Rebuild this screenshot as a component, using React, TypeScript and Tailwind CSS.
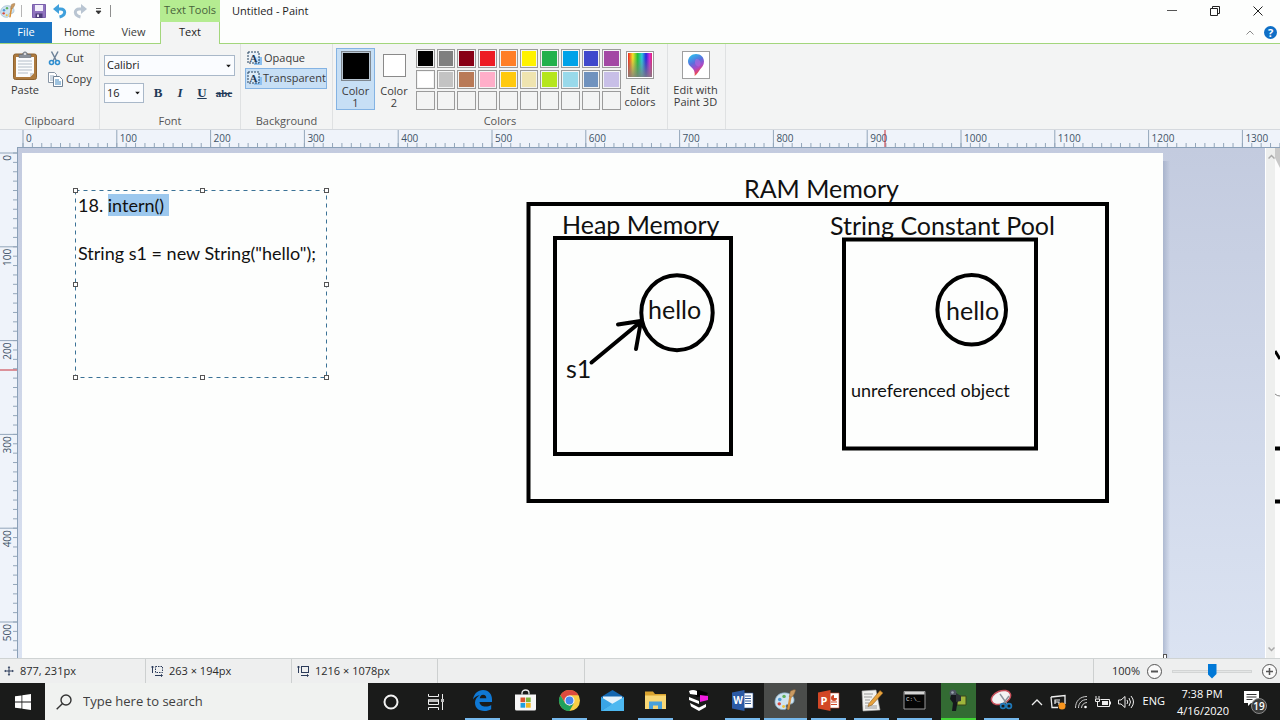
import type { ReactNode } from "react";
import clsx from "clsx";

const palette = [
  ["#000000", "#7f7f7f", "#880015", "#ed1c24", "#ff7f27", "#fff200", "#22b14c", "#00a2e8", "#3f48cc", "#a349a4"],
  ["#ffffff", "#c3c3c3", "#b97a57", "#ffaec9", "#ffc90e", "#efe4b0", "#b5e61d", "#99d9ea", "#7092be", "#c8bfe7"],
  [null, null, null, null, null, null, null, null, null, null],
];

// 100 image pixels take 93.8 screen pixels
const RULER_STEP = 93.8;

// indexes of the marks that fit in the given length, leaving room for the last label
const marks = (length: number, step: number) =>
  Array.from({ length: Math.max(0, Math.ceil(length / step)) }, (_, i) => i);

function Caret() {
  return (
    <svg className="pointer-events-none absolute right-1 top-1/2 -translate-y-1/2" width="5" height="3" viewBox="0 0 5 3">
      <path d="M0 0h5L2.5 3z" fill="#1a1a1a" />
    </svg>
  );
}

function PaletteIcon({ size }: { size: number }) {
  return (
    <svg width={size} height={size} viewBox="0 0 24 24">
      <path
        d="M11 4C5 4 1 8.500 1 13.500 1 18.500 5 21.500 10 21.500c3 0 3-1.500 2.500-3-.4-1.700.5-2.500 2.500-2.500 4 0 6-1.500 6-4.500C21 7 16.500 4 11 4z"
        fill="#cfe3f0"
        stroke="#7fa6c0"
        strokeWidth=".8"
      />
      <circle cx="6" cy="11" r="1.900" fill="#4f9bd8" />
      <circle cx="10.500" cy="7.700" r="1.800" fill="#5fb05a" />
      <circle cx="5.500" cy="15.500" r="1.800" fill="#d9463d" />
      <circle cx="10" cy="18.300" r="1.500" fill="#f0c23a" />
      <path d="M15 20.500l2.200-13" stroke="#d8903a" strokeWidth="2.400" strokeLinecap="round" />
      <path d="M16 8l1-5.500c2-1.500 4.500-2 5.500-1.500-.5 3-2 5.500-4 7.500z" fill="#c99a62" stroke="#8c6337" strokeWidth=".5" />
    </svg>
  );
}

function SaveIcon() {
  return (
    <svg width="14" height="14" viewBox="0 0 14 14">
      <path d="M.5.5h13v13h-13z" fill="#8f74be" stroke="#7a60ac" />
      <path d="M3 1h8v6H3z" fill="#f2effa" />
      <path d="M3.500 9.500h7V14h-7z" fill="#4b3b78" />
      <path d="M5 10.500h2V13H5z" fill="#e8e2f5" />
    </svg>
  );
}

function TurnArrow({ color, flip }: { color: string; flip?: boolean }) {
  return (
    <svg className={clsx(flip && "-scale-x-100")} width="14" height="15" viewBox="0 0 14 15">
      <path d="M4 5h3.500C13.500 5 13 11.500 6.500 13" fill="none" stroke={color} strokeWidth="3" />
      <path d="M6 0v10L0 5z" fill={color} />
    </svg>
  );
}

function ClipboardIcon() {
  return (
    <svg width="24" height="29" viewBox="0 0 24 29">
      <rect x=".5" y="3" width="23" height="25.500" rx="2" fill="#ad7a3e" stroke="#8d6230" />
      <path d="M3 6h18v16l-4 4H3z" fill="#fbfcfd" />
      <path d="M5 10h14M5 13h14M5 16h14M5 19h14M5 22h10" stroke="#b3bdc8" />
      <path d="M17 26v-4h4z" fill="#cfd5dc" />
      <path d="M6 6.500V3.500h3.500C9.500 0 14.500 0 14.500 3.500H18v3z" fill="#8a9099" stroke="#5f666f" strokeWidth=".6" />
      <circle cx="12" cy="3" r="1" fill="#f0f0f0" />
    </svg>
  );
}

function ScissorsIcon() {
  return (
    <svg width="14" height="15" viewBox="0 0 14 15" fill="none">
      <path d="M3.500 0.500L8.500 10M10 .5L5 10" stroke="#6d8298" strokeWidth="1.500" />
      <circle cx="3.500" cy="11.500" r="2" stroke="#2f8ed0" strokeWidth="1.600" />
      <circle cx="9.500" cy="11.500" r="2" stroke="#2f8ed0" strokeWidth="1.600" />
    </svg>
  );
}

function CopyIcon() {
  return (
    <svg width="15" height="15" viewBox="0 0 15 15">
      <path d="M.5.5h6l2 2v8h-8z" fill="#fff" stroke="#8795a5" />
      <path d="M2 4h4M2 6h4M2 8h4" stroke="#9cb0c4" />
      <path d="M5.500 4.500h6l3 3v7h-9z" fill="#fff" stroke="#6f8194" />
      <path d="M7 8h4M7 10h6M7 12h6" stroke="#3f86bd" />
    </svg>
  );
}

function LetterBoxIcon() {
  return (
    <svg width="16" height="15" viewBox="0 0 16 15">
      <path d="M7 6h8v8H7z" fill="#8cc0f0" />
      <rect x="1" y="1" width="11" height="11" fill="#e6f0fa" fillOpacity=".7" stroke="#24425f" strokeDasharray="2 1" />
      <text x="6.500" y="10.500" textAnchor="middle" fontSize="11" fontWeight="bold" fontFamily="Liberation Serif, serif" fill="#1f3a58">
        A
      </text>
    </svg>
  );
}

function RainbowIcon() {
  return (
    <svg width="28" height="28" viewBox="0 0 28 28">
      <defs>
        <linearGradient id="hue">
          <stop offset="0" stopColor="#e22" />
          <stop offset=".2" stopColor="#f4e22a" />
          <stop offset=".4" stopColor="#22c03a" />
          <stop offset=".58" stopColor="#2cc8dd" />
          <stop offset=".75" stopColor="#2727dd" />
          <stop offset=".9" stopColor="#d22ad8" />
          <stop offset="1" stopColor="#e2286a" />
        </linearGradient>
        <linearGradient id="fade" x2="0" y2="1">
          <stop offset=".2" stopColor="#808080" stopOpacity="0" />
          <stop offset="1" stopColor="#808080" stopOpacity=".85" />
        </linearGradient>
      </defs>
      <rect x=".5" y=".5" width="27" height="27" fill="#fff" stroke="#9a9a9a" />
      <path d="M2 2h24v24H2z" fill="url(#hue)" />
      <path d="M2 2h24v24H2z" fill="url(#fade)" />
    </svg>
  );
}

function Paint3DIcon() {
  return (
    <svg width="28" height="28" viewBox="0 0 28 28">
      <defs>
        <linearGradient id="drop" x1=".2" x2=".6" y2="1">
          <stop offset="0" stopColor="#29c3f0" />
          <stop offset=".4" stopColor="#5a6fdc" />
          <stop offset=".65" stopColor="#a94bc8" />
          <stop offset=".85" stopColor="#e2446a" />
          <stop offset="1" stopColor="#f49a2c" />
        </linearGradient>
      </defs>
      <rect x=".5" y=".5" width="27" height="27" fill="#fff" stroke="#9f9f9f" />
      <path d="M14 3c5 0 8 3.500 8 7.500 0 3.500-2 5.500-4 8-1.500 2-3 5-5.500 6.500.5-2 0-4-.5-5.500C11 16.500 6 15 6 10.500 6 6.500 9.500 3 14 3z" fill="url(#drop)" />
      <path d="M14 8c3 0 5 2 4.500 5-.4 2-2 3-3.500 2-2-1.500-3-4-1-7z" fill="#b565e0" fillOpacity=".6" />
    </svg>
  );
}

function TitleBar() {
  return (
    <header className="flex h-[22px] items-center">
      <div className="flex h-full w-40 items-center">
        <PaletteIcon size={16} />
        <span className="ml-[5px] h-3 w-px bg-[#b5b5b5]" />
        <button aria-label="Save" className="ml-[10px]"><SaveIcon /></button>
        <button aria-label="Undo" className="ml-[7px]"><TurnArrow color="#3fa0dc" /></button>
        <button aria-label="Redo" className="ml-[6px]"><TurnArrow color="#b9c5d2" flip /></button>
        <button aria-label="Customize Quick Access Toolbar" className="ml-2">
          <svg width="7" height="7" viewBox="0 0 7 7"><path d="M1 .5h5M1 3h5L3.500 6z" stroke="#333" strokeWidth=".8" fill="#333" /></svg>
        </button>
        <span className="ml-2 h-3 w-px bg-[#8f8f8f]" />
      </div>
      <div className="h-full w-[60px] bg-[#b5ec91] text-center text-[11px] leading-[20px] text-[#47623b]">Text Tools</div>
      <h1 className="ml-3 text-[11px] text-[#1d1d1d]">Untitled - Paint</h1>
      <div className="ml-auto flex h-full items-center text-[#222]">
        <button aria-label="Minimize" className="flex w-[43px] justify-center">
          <svg width="10" height="10" viewBox="0 0 10 10"><path d="M0 4.500h10" stroke="#555" /></svg>
        </button>
        <button aria-label="Restore" className="flex w-[43px] justify-center">
          <svg width="10" height="10" viewBox="0 0 10 10" fill="none" stroke="currentColor"><path d="M.5 2.500h7v7h-7zM2.500 2.500v-2h7v7h-2" /></svg>
        </button>
        <button aria-label="Close" className="flex w-[43px] justify-center">
          <svg width="10" height="10" viewBox="0 0 10 10" stroke="currentColor"><path d="M.5.5l9 9M9.500.5l-9 9" /></svg>
        </button>
        <span className="w-px" />
      </div>
    </header>
  );
}

function Tabs() {
  return (
    <nav className="flex h-[22px] items-stretch border-b border-[#a3d67c] text-[11px] text-[#3c3c3c]">
      <button className="w-[52px] bg-[#1a75c4] text-white">File</button>
      <button className="w-[55px]">Home</button>
      <button className="w-[53px]">View</button>
      <button className="-mb-px w-[60px] border-x border-[#a3d67c] bg-[#f3f4f4] pb-px text-[#222]">Text</button>
      <div className="ml-auto flex items-center">
        <button aria-label="Minimize the Ribbon" className="mr-[10px]">
          <svg width="8" height="5" viewBox="0 0 8 5" fill="none" stroke="#8a8a8a"><path d="M.5 4.500L4 1l3.500 3.500" /></svg>
        </button>
        <button aria-label="Help" className="mr-[3px]">
          <svg width="13" height="13" viewBox="0 0 13 13">
            <circle cx="6.500" cy="6.500" r="6.500" fill="#0f6fc6" />
            <text x="6.500" y="10.500" textAnchor="middle" fontSize="11" fontWeight="bold" fill="#fff">?</text>
          </svg>
        </button>
      </div>
    </nav>
  );
}

function Group({ label, className, children }: { label?: string; className: string; children: ReactNode }) {
  return (
    <section className={clsx("flex h-full flex-col border-r border-[#dfe1e2]", className)}>
      <div className="h-[69px]">{children}</div>
      <div className="text-center text-[11px] leading-4 text-[#555]">{label}</div>
    </section>
  );
}

function Ribbon() {
  return (
    <div className="flex h-[86px] border-b border-[#d5d9de] bg-[#f3f4f4] text-[11px] text-[#3a3a3a]">
      <Group label="Clipboard" className="w-[100px]">
        <div className="flex">
          <button className="ml-2 flex w-[34px] flex-col items-center pt-[7px]">
            <ClipboardIcon />
            <span className="leading-5">Paste</span>
          </button>
          <div className="ml-[6px] flex flex-col pt-1">
            <button className="flex h-[21px] items-center gap-1">
              <ScissorsIcon />
              Cut
            </button>
            <button className="flex h-[21px] items-center gap-[3px]">
              <CopyIcon />
              Copy
            </button>
          </div>
        </div>
      </Group>

      <Group label="Font" className="w-[141px]">
        <div className="px-1 pt-[11px]">
          <div className="relative w-[131px]">
            <select aria-label="Font family" className="block h-[21px] w-full appearance-none border border-[#a9b8c9] bg-[#fafcff] px-[2px] text-[#222]">
              <option>Calibri</option>
            </select>
            <Caret />
          </div>
          <div className="mt-[7px] flex items-center">
            <div className="relative w-10">
              <select aria-label="Font size" className="block h-5 w-full appearance-none border border-[#a9b8c9] bg-[#fafcff] px-[2px] text-[#222]">
                <option>16</option>
              </select>
              <Caret />
            </div>
            <div className="ml-[3px] flex font-['Liberation_Serif',serif] text-[13px] text-[#1f3a58]">
              <button className="w-[22px] font-bold">B</button>
              <button className="w-[22px] font-bold italic">I</button>
              <button className="w-[22px] font-bold underline">U</button>
              <button className="w-[22px] text-[11px] font-bold line-through">abc</button>
            </div>
          </div>
        </div>
      </Group>

      <Group label="Background" className="w-[92px]">
        <div className="flex flex-col items-start pl-1 pt-1">
          <button className="flex h-5 items-center gap-px border border-transparent px-px">
            <LetterBoxIcon />
            Opaque
          </button>
          <button className="flex h-[21px] items-center border border-[#84b3e3] bg-[#c7dff5] pl-px">
            <LetterBoxIcon />
            Transparent
          </button>
        </div>
      </Group>

      <Group label="Colors" className="w-[335px]">
        <div className="flex text-center leading-3">
          <button className="ml-[3px] mt-1 flex h-[62px] w-[39px] flex-col items-center gap-1 border border-[#84b3e3] bg-[#c7dff5] pt-[2px]">
            <span className="size-[30px] border border-[#7e8790] bg-black shadow-[inset_0_0_0_1px_#b9c6d2]" />
            <span className="w-[30px]">Color 1</span>
          </button>
          <button className="mt-1 flex h-[62px] w-[38px] flex-col items-center gap-2 pt-[6px]">
            <span className="size-[23px] border border-[#8a8a8a] bg-white" />
            <span className="w-[30px]">Color 2</span>
          </button>
          <div className="ml-[3px] mt-[5px] grid w-[205px] grid-cols-10 gap-[2px]">
            {palette.flat().map((color, i) => (
              <button key={i} aria-label={color ?? "Empty color"} className="h-[19px] border border-[#9b9b9b] p-px">
                <span className="block size-full" style={{ backgroundColor: color ?? "transparent" }} />
              </button>
            ))}
          </div>
          <button className="mt-[7px] flex w-[38px] flex-col items-center gap-[5px]">
            <RainbowIcon />
            <span>Edit colors</span>
          </button>
        </div>
      </Group>

      <Group className="w-[58px]">
        <button className="mt-[7px] flex w-[55px] flex-col items-center gap-[5px] leading-3">
          <Paint3DIcon />
          <span className="w-12">Edit with Paint 3D</span>
        </button>
      </Group>
    </div>
  );
}

function HorizontalRuler() {
  const length = window.innerWidth - 50;
  return (
    <svg className="block h-[18px] w-full shrink-0 bg-[#eff3fa]" stroke="#93a6ba">
      {marks(length + 50, RULER_STEP / 10).map((i) => (
        <path key={i} d={`M${23 + (i * RULER_STEP) / 10} 13v4`} />
      ))}
      {marks(length, RULER_STEP).map((i) => (
        <g key={i}>
          <path d={`M${23 + i * RULER_STEP} 0v17`} />
          <text x={26 + i * RULER_STEP} y="12" fontSize="10" fill="#3f5468" stroke="none">
            {i * 100}
          </text>
        </g>
      ))}
      <path d="M885 0v17" stroke="#c8303a" />
      <path d="M17 17.500h3000" stroke="#8ba0b8" />
    </svg>
  );
}

function VerticalRuler() {
  const length = window.innerHeight - 235;
  return (
    <svg className="block h-full w-[18px] shrink-0 bg-[#eff3fa]" stroke="#93a6ba">
      {marks(length + 25, RULER_STEP / 10).map((i) => (
        <path key={i} d={`M13 ${5 + (i * RULER_STEP) / 10}h4`} />
      ))}
      {marks(length, RULER_STEP).map((i) => (
        <g key={i}>
          <path d={`M0 ${5 + i * RULER_STEP}h17`} />
          <text transform={`translate(11 ${7 + i * RULER_STEP}) rotate(-90)`} textAnchor="end" fontSize="10" fill="#3f5468" stroke="none">
            {i * 100}
          </text>
        </g>
      ))}
      <path d="M0 222h17" stroke="#c8303a" />
      <path d="M17.500 0v3000" stroke="#8ba0b8" />
    </svg>
  );
}

function Drawing() {
  return (
    <svg className="absolute inset-0 size-full font-[Lato,sans-serif]" fill="none">
      <g fill="#111" fontSize="25">
        <text x="722" y="45">RAM Memory</text>
        <text x="540" y="81">Heap Memory</text>
        <text x="808" y="82">String Constant Pool</text>
        <text x="626" y="166">hello</text>
        <text x="924" y="167">hello</text>
        <text x="544" y="225">s1</text>
        <text x="829" y="244" fontSize="18">unreferenced object</text>
      </g>
      <g stroke="#000" strokeWidth="4">
        <rect x="506.500" y="51" width="578.500" height="297" />
        <rect x="533" y="85" width="176" height="216" />
        <rect x="822" y="86.500" width="192" height="209" />
        <ellipse cx="655" cy="159.700" rx="35.700" ry="37.500" />
        <ellipse cx="949.700" cy="156.800" rx="34.300" ry="34.800" />
        <path d="M569.500 209.500L619 168.500M596 171.500l23-3.500-5 28" strokeLinecap="round" />
      </g>
    </svg>
  );
}

function TextBox() {
  return (
    <div className="absolute left-[51px] top-[35px] h-[192px] w-[256px]">
      <svg className="absolute inset-0 size-full" viewBox="0 0 256 192" fill="none">
        <rect x="2.500" y="2.500" width="251" height="187" stroke="#3b7296" strokeDasharray="4 4" />
        {[2.5, 129.5, 253.5].map((x) =>
          [2.5, 96.5, 189.5].map((y) =>
            x === 129.5 && y === 96.5 ? null : (
              <rect key={`${x}-${y}`} x={x - 2} y={y - 2} width="4" height="4" fill="#fff" stroke="#555" />
            )
          )
        )}
      </svg>
      <div
        role="textbox"
        aria-label="Text"
        contentEditable
        suppressContentEditableWarning
        className="relative whitespace-pre pl-[5px] pt-[5px] font-[Lato,sans-serif] text-lg leading-6 text-[#111] outline-none"
      >
        <p>18. <mark className="bg-[#9cc8ee] text-inherit">intern() </mark></p>
        <p><br /></p>
        <p>String s1 = new String("hello");</p>
      </div>
    </div>
  );
}

function Workspace() {
  return (
    <main className="flex min-h-0 flex-1 overflow-hidden">
      <VerticalRuler />
      <div className="flex min-w-0 flex-1 bg-linear-to-b from-[#c3cbdf] to-[#dbe3f2] pl-1 pt-[5px]">
        <div className="relative min-w-0 flex-1 bg-[#fdfefd]">
          <Drawing />
          <TextBox />
          <span className="absolute -right-1 bottom-0 h-1 w-1 border border-b-0 border-[#555] bg-white" />
        </div>
        <div className="mt-2 w-[102px]">
          <div className="h-full w-[7px] bg-linear-to-r from-[#9daac4]/70 to-transparent" />
        </div>
      </div>
      <div className="flex w-[10px] flex-col items-end justify-between border-l border-white bg-[#eeefee] py-[6px]">
        <svg width="7" height="5" viewBox="0 0 7 5" fill="none" stroke="#aaa" strokeWidth="1.500"><path d="M.5 4.500l3-3 3 3" /></svg>
        <svg width="7" height="5" viewBox="0 0 7 5" fill="none" stroke="#aaa" strokeWidth="1.500"><path d="M.5.5l3 3 3-3" /></svg>
      </div>
      <svg className="h-full w-[5px] bg-[#fdfdfd]" stroke="#000" fill="none">
        <path d="M0 0h5v20l-5-10z" fill="#c9c9c9" stroke="none" />
        <path d="M0 203l5 8" strokeWidth="3" />
        <path d="M0 246q2 2 5 2" stroke="#888" />
        <path d="M0 300.500h5M0 353.500h5" strokeWidth="4" />
      </svg>
    </main>
  );
}

function StatusBar() {
  return (
    <footer className="flex h-[25px] items-stretch border-t border-[#cfd3d3] bg-[#eeefef] text-[11px] text-[#2a2a2a]">
      <div className="flex w-[146px] items-center gap-[6px] border-r border-[#cdd0d0] pl-1">
        <svg width="10" height="10" viewBox="0 0 10 10" stroke="#2b3b5a" fill="#2b3b5a"><path d="M5 1v8M1 5h8" /><path d="M5 0l1.300 1.800H3.700zM5 10l1.300-1.800H3.700zM0 5l1.800-1.300v2.600zM10 5L8.200 3.700v2.600z" stroke="none" /></svg>
        877, 231px
      </div>
      <div className="flex w-[146px] items-center gap-[5px] border-r border-[#cdd0d0] pl-[5px]">
        <svg width="13" height="12" viewBox="0 0 13 12" stroke="#2b3b5a" fill="none"><path d="M1.500 1v7M.3 2.500L1.500 1l1.200 1.500M4 10.500h7M10 9.300l1.500 1.200-1.500 1.200" /><rect x="4.500" y="1.500" width="7" height="6" strokeDasharray="1.500 1" /></svg>
        263 × 194px
      </div>
      <div className="flex w-[146px] items-center gap-[5px] border-r border-[#cdd0d0] pl-[5px]">
        <svg width="13" height="12" viewBox="0 0 13 12" stroke="#2b3b5a" fill="none"><path d="M1.500 1v7M.3 2.500L1.500 1l1.200 1.500M4 10.500h7M10 9.300l1.500 1.200-1.500 1.200" /><rect x="4.500" y="1.500" width="7" height="6" /></svg>
        1216 × 1078px
      </div>
      <div className="w-[147px] border-r border-[#cdd0d0]" />
      <div className="ml-auto flex items-center border-l border-[#cdd0d0] pr-[3px]">
        <label htmlFor="zoom" className="w-[46px] text-right">100%</label>
        <button aria-label="Zoom out" className="ml-[7px]">
          <svg width="15" height="15" viewBox="0 0 15 15" stroke="#555" fill="#fafafa"><circle cx="7.500" cy="7.500" r="7" /><path d="M4 7.500h7" strokeWidth="2" /></svg>
        </button>
        <input
          id="zoom"
          type="range"
          min="0"
          max="100"
          defaultValue="50"
          className="ml-[10px] h-4 w-20 appearance-none bg-transparent [&::-webkit-slider-runnable-track]:h-[3px] [&::-webkit-slider-runnable-track]:border [&::-webkit-slider-runnable-track]:border-[#d3d5d5] [&::-webkit-slider-runnable-track]:bg-[#e4e6e6] [&::-webkit-slider-thumb]:-mt-[7px] [&::-webkit-slider-thumb]:h-[15px] [&::-webkit-slider-thumb]:w-[9px] [&::-webkit-slider-thumb]:appearance-none [&::-webkit-slider-thumb]:bg-[#0078d7] [&::-webkit-slider-thumb]:[clip-path:polygon(0_0,100%_0,100%_70%,50%_100%,0_70%)]"
        />
        <button aria-label="Zoom in" className="ml-[10px]">
          <svg width="15" height="15" viewBox="0 0 15 15" stroke="#555" fill="#fafafa"><circle cx="7.500" cy="7.500" r="7" /><path d="M4 7.500h7M7.500 4v7" strokeWidth="1.500" /></svg>
        </button>
      </div>
    </footer>
  );
}

const apps: { name: string; open?: boolean; active?: boolean; alert?: boolean; icon: ReactNode }[] = [
  {
    name: "Microsoft Edge",
    open: true,
    icon: (
      <path
        d="M2 10.500C3 4.500 7 1 12 1c6 0 9 4.500 9 9.500V13H8.500c.3 3.300 3 4.500 6 4.500 2.200 0 4-.6 5.700-1.600v4.300C18.200 21.400 16 22 13.300 22 7.500 22 4 18.800 4 13.800c0-3.300 1.700-6 4.700-7.600C5.500 6.700 3.300 8.500 2 10.500zM8.700 9.300h6.600c0-2.300-1-3.600-3.200-3.600-1.900 0-3.100 1.500-3.400 3.600z"
        fill="#0f78d4"
      />
    ),
  },
  {
    name: "Microsoft Store",
    icon: (
      <>
        <path d="M8 5.500V4c0-4 7-4 7 0v1.500" fill="none" stroke="#eee" strokeWidth="1.300" />
        <path d="M1 5.500h21V20q0 1.500-1.500 1.500h-18Q1 21.500 1 20z" fill="#f7f7f7" />
        <path d="M6.500 8.500h4.700v4.700H6.500z" fill="#d9532c" />
        <path d="M12 8.500h4.700v4.700H12z" fill="#7db53a" />
        <path d="M6.500 14h4.700v4.700H6.500z" fill="#1f9fe0" />
        <path d="M12 14h4.700v4.700H12z" fill="#f2b822" />
      </>
    ),
  },
  {
    name: "Google Chrome",
    open: true,
    icon: (
      <>
        <circle cx="11.500" cy="11.500" r="10.500" fill="#f7ce46" />
        <path d="M2.400 6.250A10.500 10.500 0 0 1 20.600 6.250H11.500L7 14z" fill="#dc4b3e" />
        <path d="M2.400 6.250A10.500 10.500 0 0 0 11.500 22L16 14l-4.500 2.700L7 14z" fill="#1fa15d" />
        <circle cx="11.500" cy="11.500" r="5" fill="#f5f5f5" />
        <circle cx="11.500" cy="11.500" r="3.900" fill="#4587f0" />
      </>
    ),
  },
  {
    name: "Mail",
    icon: (
      <>
        <path d="M0 8l11.500-7L23 8v14H0z" fill="#1266b0" />
        <path d="M2 7.500h19v8H2z" fill="#e4f2fb" />
        <path d="M0 8l11.500 7L0 22z" fill="#3aa5e6" />
        <path d="M23 8l-12 7L0 22h23z" fill="#4db8f0" />
      </>
    ),
  },
  {
    name: "File Explorer",
    open: true,
    icon: (
      <>
        <path d="M1 2.500h8l2 2.500h11v15H1z" fill="#d9a32f" />
        <path d="M1 6.500h21V20H1z" fill="#f8d775" />
        <path d="M5 20v-7.500h13V20h-4v-3.500H9V20z" fill="#48a0dc" />
      </>
    ),
  },
  {
    name: "Stacked books",
    icon: (
      <>
        <path d="M3 2l9-1 9 3-2 3-9 1z" fill="#000" />
        <path d="M2 2q4-2 8 0v4L3 5z" fill="#fff" />
        <path d="M13 6l8 1v4l-8 2z" fill="#f01de0" />
        <path d="M2 8l10 4v3L2 11zM3 14l9 4.500 7-3.500v3l-7 4-8-4.500z" fill="#fff" />
      </>
    ),
  },
  {
    name: "Word",
    open: true,
    icon: (
      <>
        <path d="M11 4h11v15H11z" fill="#fff" stroke="#2b579a" strokeWidth=".6" />
        <path d="M14 7h6M14 9.500h6M14 12h6M14 14.500h6" stroke="#2b579a" />
        <path d="M1 3.500L13.500 1v21L1 19.500z" fill="#2b5aa5" />
        <text x="7" y="15" textAnchor="middle" fontSize="10" fontWeight="bold" fill="#fff">W</text>
      </>
    ),
  },
  { name: "Paint", open: true, active: true, icon: <PaletteIcon size={23} /> },
  {
    name: "PowerPoint",
    open: true,
    icon: (
      <>
        <path d="M11 4h11v15H11z" fill="#fff" stroke="#d24726" strokeWidth=".6" />
        <path d="M14 13h6M14 15.500h6" stroke="#d24726" />
        <path d="M17 6a3 3 0 1 0 3 3h-3z" fill="#d24726" />
        <path d="M1 3.500L13.500 1v21L1 19.500z" fill="#d24726" />
        <text x="7" y="15.500" textAnchor="middle" fontSize="11" fontWeight="bold" fill="#fff">P</text>
      </>
    ),
  },
  {
    name: "Notepad",
    open: true,
    icon: (
      <>
        <path d="M2 2l14-1 4 20-17 1z" fill="#f1f1ee" stroke="#aaa" strokeWidth=".6" />
        <path d="M4 5h9M4 8h8M5 11h5M5 14h4M5 17h12M5 19h12" stroke="#999" />
        <path d="M9 14.500L20 1.500l3 2.500-11 12-4 1.500z" fill="#e8a33d" stroke="#8a5a1c" strokeWidth=".6" />
      </>
    ),
  },
  {
    name: "Command Prompt",
    open: true,
    icon: (
      <>
        <path d="M1 2.500h21v17.500H1z" fill="#050505" stroke="#999" />
        <path d="M1.500 3h20v2.500h-20z" fill="#d5d5d5" />
        <text x="3" y="12" fontSize="6" fontFamily="Liberation Mono, monospace" fill="#ddd">C:\_</text>
      </>
    ),
  },
  {
    name: "Screen recorder",
    open: true,
    alert: true,
    icon: (
      <>
        <path d="M10 7h9v9h-9z" fill="#9fb53c" stroke="#39461a" />
        <circle cx="6" cy="4" r="3.500" fill="#4d5560" />
        <circle cx="5.500" cy="3.500" r="1.300" fill="#9ba5b0" />
        <path d="M4 6h6l1 4-2 12H5l1-8-3-4z" fill="#15181c" />
        <path d="M9 4l5 3v5l-5 1z" fill="#2c3137" />
      </>
    ),
  },
  {
    name: "Snipping Tool",
    open: true,
    icon: (
      <>
        <ellipse cx="11" cy="8.500" rx="10" ry="6.500" transform="rotate(-22 11 8.500)" fill="#f3f3f3" stroke="#c9515c" strokeWidth="1.500" />
        <path d="M10 5l7 10M19 7l-6 8" stroke="#8b939c" strokeWidth="1.400" />
        <circle cx="13" cy="17" r="2.400" fill="none" stroke="#1f78b8" strokeWidth="1.700" />
        <circle cx="19" cy="17" r="2.400" fill="none" stroke="#1f78b8" strokeWidth="1.700" />
      </>
    ),
  },
];

function TaskbarApp({ app }: { app: (typeof apps)[number] }) {
  return (
    <button aria-label={app.name} className={clsx("flex flex-1 flex-col items-center", app.active && "bg-[#4b4d4b]")}>
      <span className={clsx("flex h-[35px] w-[35px] items-center justify-center", app.alert && "bg-[#336b33]")}>
        <svg width="23" height="23" viewBox="0 0 23 23">{app.icon}</svg>
      </span>
      {app.open && (
        <span
          className={clsx("h-[2px]", app.active ? "w-full" : "w-[35px]", app.alert ? "bg-[#43d636]" : "bg-[#76b9ed]")}
        />
      )}
    </button>
  );
}

function Taskbar() {
  return (
    <div className="flex h-[37px] items-stretch bg-[#1a1b1a] text-white">
      <button aria-label="Start" className="flex w-[45px] items-center justify-center">
        <svg width="16" height="16" viewBox="0 0 16 16" fill="#fff">
          <path d="M0 2.300L6.500 1.400v6.200H0zM7.300 1.300L16 0v7.600H7.300zM0 8.400h6.500v6.200L0 13.700zM7.300 8.400H16V16l-8.700-1.300z" />
        </svg>
      </button>
      <label className="flex w-[323px] items-center bg-[#f0f2f0] pl-[11px]">
        <svg width="16" height="16" viewBox="0 0 16 16" fill="none" stroke="#333" strokeWidth="1.400">
          <circle cx="10" cy="6" r="5" />
          <path d="M6.500 9.500L.7 15.300" />
        </svg>
        <input
          type="search"
          aria-label="Type here to search"
          placeholder="Type here to search"
          className="ml-[11px] flex-1 bg-transparent text-[13px] outline-none placeholder:text-[#3f3f3f]"
        />
      </label>
      <button aria-label="Cortana" className="flex w-[45px] items-center justify-center">
        <svg width="16" height="16" viewBox="0 0 16 16" fill="none"><circle cx="8" cy="8" r="6.500" stroke="#f2f2f2" strokeWidth="2" /></svg>
      </button>
      <button aria-label="Task View" className="flex w-[45px] items-center justify-center">
        <svg width="16" height="16" viewBox="0 0 16 16" fill="none" stroke="#eee">
          <path d="M.5 0v2.500h10V0M.5 16v-2.500h10V16M.5 5.500h10v5H.5zM14.500 0v16" />
          <path d="M1 5h9v3H1zM13 5h3v3h-3z" fill="#bbb" stroke="none" />
        </svg>
      </button>
      <div className="ml-[3px] flex w-[562px]">
        {apps.map((app) => (
          <TaskbarApp key={app.name} app={app} />
        ))}
      </div>
      <div className="ml-auto flex items-center">
        <div className="flex items-center gap-[7px]">
          <svg width="12" height="8" viewBox="0 0 12 8" fill="none" stroke="#eee" strokeWidth="1.300"><path d="M1 7l5-5 5 5" /></svg>
          <svg width="17" height="16" viewBox="0 0 17 16" fill="none" stroke="#eee">
            <path d="M1 3l14-1.500V10M8 13.500H2L1 3" strokeWidth="1.300" />
            <path d="M5 10V6h5M5 8h4v3" strokeWidth="1.200" />
            <circle cx="12" cy="12" r="3.500" fill="#f7941d" stroke="none" />
          </svg>
          <svg width="14" height="14" viewBox="0 0 14 14" fill="none" stroke="#ccc">
            <path d="M1.500 13C1.500 6 6 1.500 13 1.500M4.500 13C4.500 8 8 4.500 13 4.500M7.500 13c0-3 2.500-5.500 5.500-5.500" />
            <circle cx="11.500" cy="12" r="1.300" fill="#fff" stroke="none" />
          </svg>
          <svg width="16" height="12" viewBox="0 0 16 12" fill="none" stroke="#eee">
            <path d="M5.500 3.500h9v7h-9M15.500 5.500v3" />
            <path d="M7 5h6v4H7z" fill="#eee" stroke="none" />
            <path d="M1 0v2.500M4 0v2.500M.5 3h4v2.500h-4zM2.500 5.500v5H6" />
          </svg>
          <svg width="16" height="14" viewBox="0 0 16 14" fill="none" stroke="#eee">
            <path d="M.5 5h2.500l4-3.500v11L3 9H.5zM9 5q1.500 2 0 4M11 3q3 4 0 8M13 1q5 6 0 12" />
          </svg>
        </div>
        <span className="ml-[9px] text-[11px]">ENG</span>
        <div className="ml-3 w-[50px] text-center text-[11px] leading-[17px]">
          <div>7:38 PM</div>
          <div>4/16/2020</div>
        </div>
        <button aria-label="19 new notifications" className="ml-4 mr-3">
          <svg width="25" height="24" viewBox="0 0 25 24">
            <path d="M1 1h15v12H8l-3 3v-3H1z" fill="#fff" />
            <path d="M3.500 4.500h10M3.500 7h10M3.500 9.500h6" stroke="#333" />
            <circle cx="16" cy="16" r="7.500" fill="#3b3c3b" stroke="#8a8a8a" />
            <text x="16" y="20" textAnchor="middle" fontSize="10" fontWeight="600" fill="#fff">19</text>
          </svg>
        </button>
      </div>
    </div>
  );
}

export default function App() {
  return (
    <div className="flex h-screen flex-col overflow-hidden bg-[#fdfefd] font-['Open_Sans','Noto_Sans',sans-serif]">
      <TitleBar />
      <Tabs />
      <Ribbon />
      <HorizontalRuler />
      <Workspace />
      <StatusBar />
      <Taskbar />
    </div>
  );
}
